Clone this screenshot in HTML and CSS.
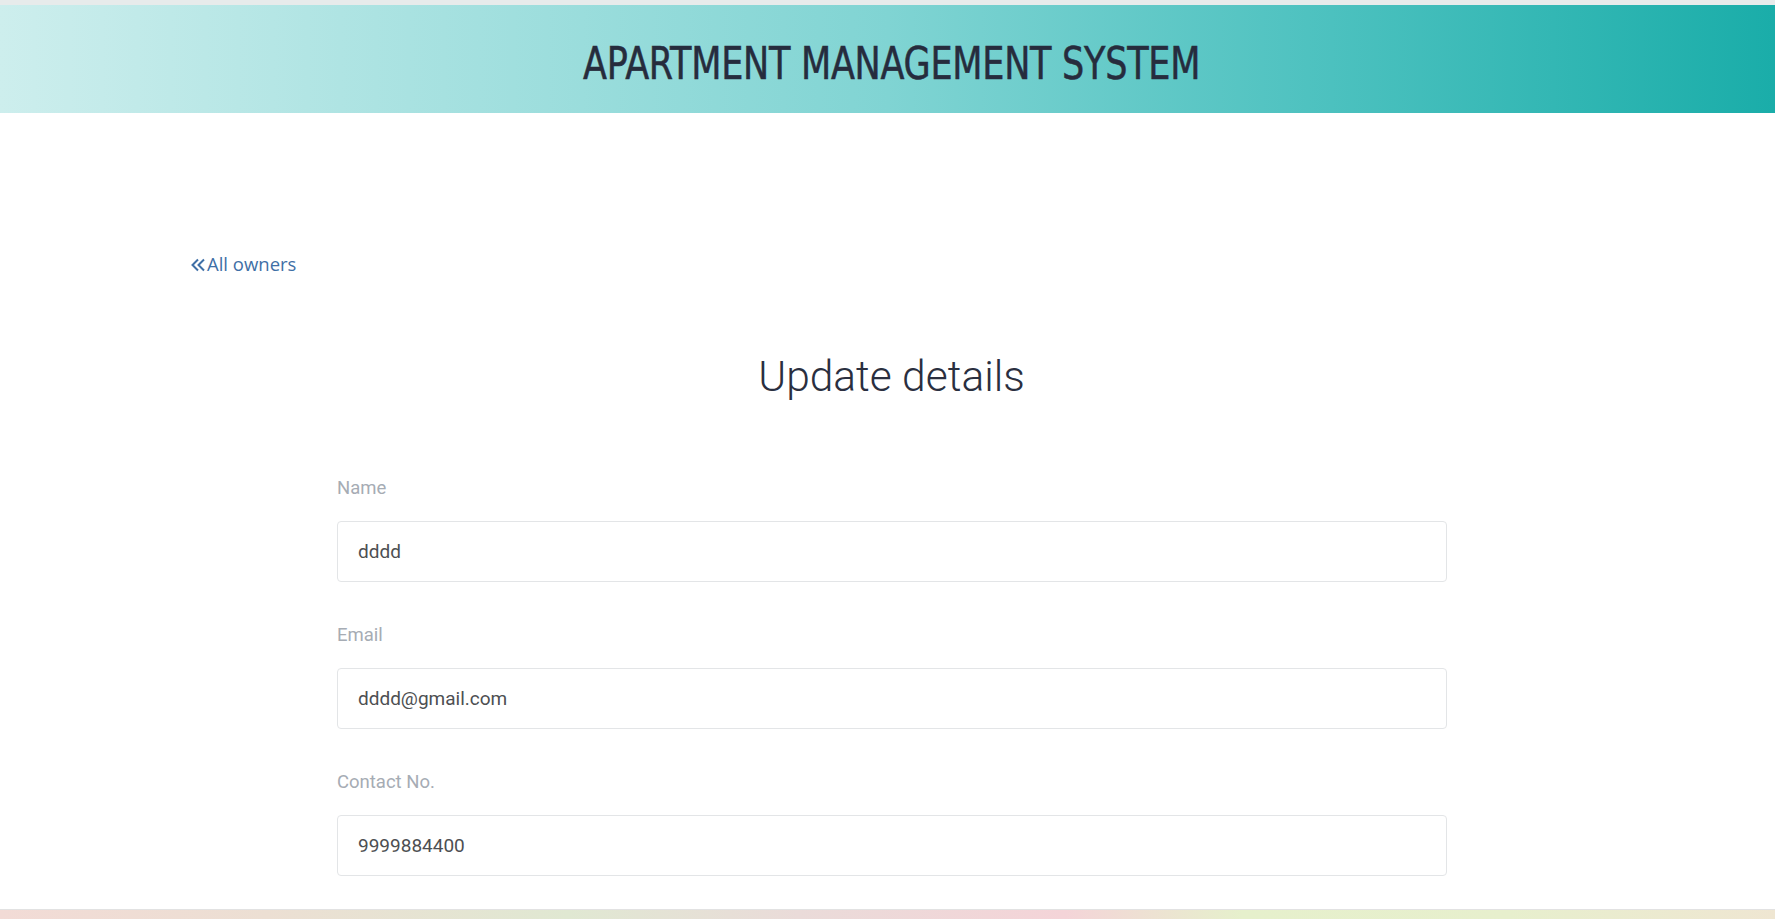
FILE: index.html
```html
<!DOCTYPE html>
<html lang="en">
<head>
<meta charset="utf-8">
<title>Apartment Management System</title>
<link rel="stylesheet" href="styles.css">
</head>
<body>
<div class="topstrip"></div>
<header class="header">
  <h1 class="brand">APARTMENT MANAGEMENT SYSTEM</h1>
</header>
<main class="main">
  <a class="back" href="#">
    <svg class="chev" viewBox="0 0 16 16" width="16" height="16" aria-hidden="true">
      <path d="M8 2.5 L2.5 8 L8 13.5 M14 2.5 L8.5 8 L14 13.5" fill="none" stroke="currentColor" stroke-width="2"/>
    </svg><span>All owners</span>
  </a>
  <h2 class="title">Update details</h2>
  <form class="form">
    <div class="group">
      <label class="label">Name</label>
      <div class="input">dddd</div>
    </div>
    <div class="group">
      <label class="label">Email</label>
      <div class="input">dddd@gmail.com</div>
    </div>
    <div class="group">
      <label class="label">Contact No.</label>
      <div class="input">9999884400</div>
    </div>
  </form>
</main>
<footer class="footer"></footer>
</body>
</html>
```
FILE: styles.css
```css
html, body {
  margin: 0;
  padding: 0;
  background: #ffffff;
  overflow: hidden;
}
body {
  font-family: Roboto, "Liberation Sans", sans-serif;
}
.topstrip {
  height: 5px;
  background: #e7ebeb;
}
.header {
  height: 108px;
  background: linear-gradient(90deg, #cdeeed 0%, #a6e1e0 25%, #80d4d3 50%, #4cc1bf 75%, #1aada9 100%);
  display: flex;
  align-items: center;
  justify-content: center;
  padding-left: 8px;
  box-sizing: border-box;
}
.brand {
  margin: 0;
  font-family: "Liberation Sans Narrow", "DejaVu Sans Condensed", "Liberation Sans", sans-serif;
  font-weight: 400;
  font-size: 44px;
  color: #262c3d;
  letter-spacing: -0.3px;
  padding-top: 8px;
  transform: scaleX(0.885);
  -webkit-text-stroke: 0.5px #262c3d;
}
.main {
  display: flex;
  flex-direction: column;
}
.back {
  margin-top: 139px;
  margin-left: 190px;
  align-self: flex-start;
  display: flex;
  align-items: center;
  gap: 1px;
  color: #3f6fa6;
  text-decoration: none;
  font-family: "Open Sans", sans-serif;
  font-size: 18.5px;
  line-height: 24px;
}
.chev {
  display: block;
  margin-top: 1px;
}
.title {
  margin: 76px 0 0;
  text-align: center;
  font-family: Roboto, sans-serif;
  font-weight: 300;
  font-size: 42.5px;
  line-height: 50px;
  color: #2a2f3f;
  padding-left: 8px;
}
.form {
  margin: 74px 0 0 337px;
  width: 1110px;
  display: flex;
  flex-direction: column;
  gap: 41px;
}
.group {
  display: flex;
  flex-direction: column;
}
.label {
  font-family: Roboto, sans-serif;
  font-size: 18.5px;
  line-height: 24px;
  color: #a6acb4;
  margin-bottom: 21px;
}
.input {
  height: 61px;
  box-sizing: border-box;
  border: 1px solid #e3e5e7;
  border-radius: 4px;
  background: #fff;
  padding: 0 20px;
  display: flex;
  align-items: center;
  font-family: Roboto, sans-serif;
  font-size: 19px;
  color: #4d4f52;
}
.footer {
  margin-top: 33px;
  height: 10px;
  border-top: 1px solid #e2e2e2;
  background: linear-gradient(90deg, #f2dbd6 0%, #ecdfd3 15%, #e0e8d2 32%, #eadbd9 45%, #f4d4d8 60%, #e6f0cc 70%, #e7efcd 85%, #efe6d2 100%);
}
```
